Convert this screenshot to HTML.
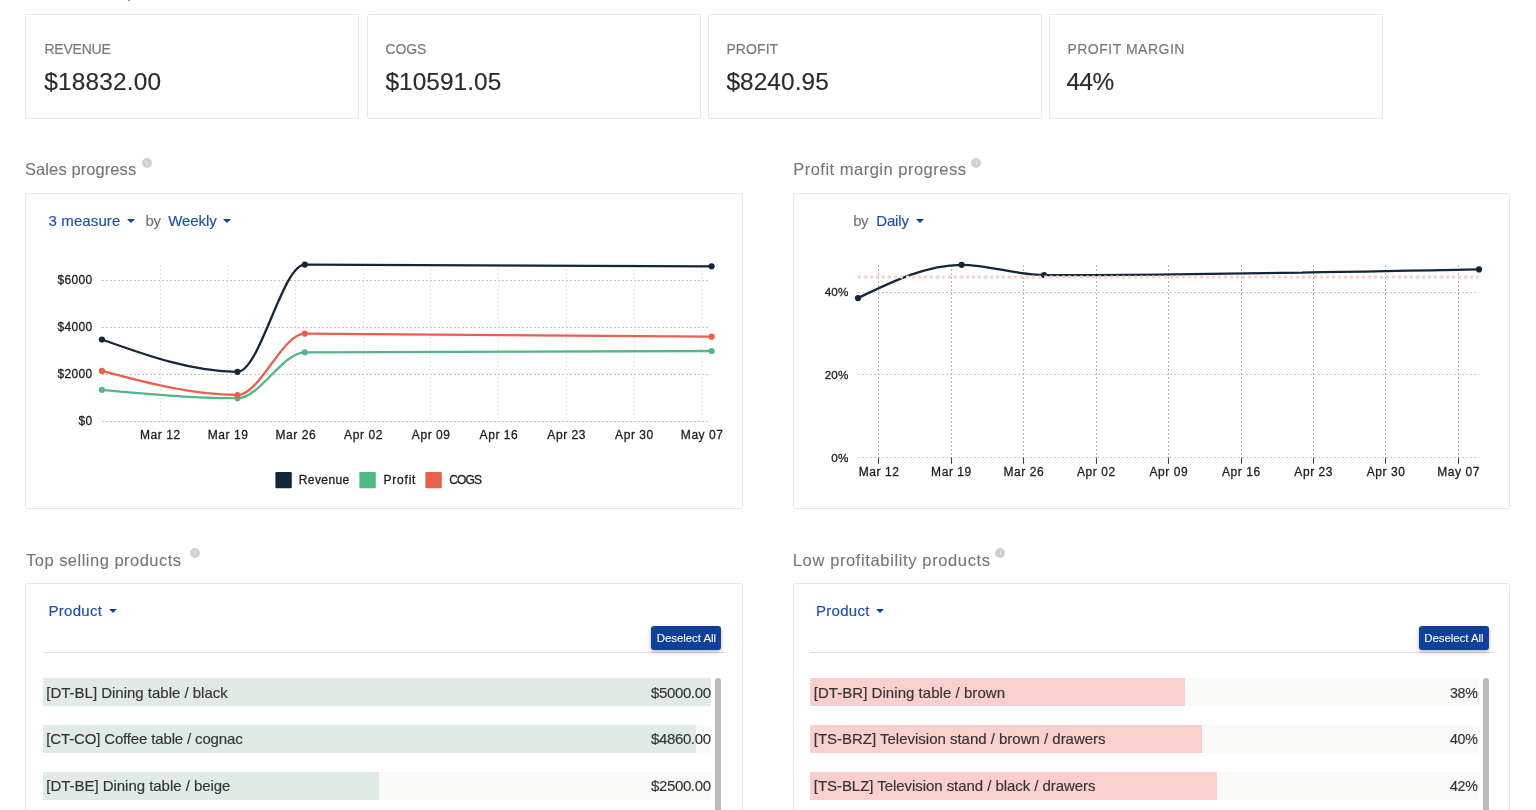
<!DOCTYPE html>
<html lang="en"><head><meta charset="utf-8"><title>Sales dashboard</title>
<style>
html,body{margin:0;padding:0;background:#fff}
body{width:1536px;height:810px;position:relative;overflow:hidden;font-family:'Liberation Sans',sans-serif;}
#app{position:absolute;left:0;top:0;width:1536px;height:810px;will-change:transform}
.t{position:absolute;white-space:pre;margin:0;padding:0;font-weight:400;-webkit-text-stroke:.16px}
ul{list-style:none;margin:0;padding:0}
button{border:0;padding:0;margin:0;font:inherit;cursor:pointer}
a{text-decoration:none}
.box{position:absolute;box-sizing:border-box;border:1px solid #e9e9e9;border-radius:2px;background:#fff}
.t.h{-webkit-text-stroke:.08px}
.abs{position:absolute}
.info{position:absolute;width:10px;height:10px;border-radius:50%;background:#cfd1d0;color:#ececec;font-size:7px;line-height:10.6px;text-align:center;font-weight:400}
.caret{position:absolute;width:0;height:0;border-left:4px solid transparent;border-right:4px solid transparent;border-top:4.6px solid #123f9c}
.btn{position:absolute;box-sizing:border-box;background:#10409a;border-radius:3px;box-shadow:0 2px 4px rgba(0,0,0,.28)}
.rule{position:absolute;height:1px;background:#dedede}
.row{position:absolute;height:28.2px;background:#fafaf8}
.fill{position:absolute;left:0;top:0;bottom:0}
.sb{position:absolute;width:5.8px;background:#bcbcbc;border-radius:3px 3px 0 0}
svg{position:absolute;overflow:visible}
svg text{font-family:'Liberation Sans',sans-serif;stroke:#1c1c1c;stroke-width:.28px}

</style></head><body><div id="app">
<div class="abs" style="left:128.4px;top:0;width:1.3px;height:1px;background:#8a8a8a"></div>
<section class="kpis">
<article class="box card" style="left:25px;top:14px;width:334px;height:105px">
  <h3 class="t" style="top:24.95px;font-size:14px;line-height:18px;color:#76787a;letter-spacing:-0.215px;left:18.40px;">REVENUE</h3>
  <p class="t" style="top:50.85px;font-size:24.4px;line-height:32px;color:#2a2b30;letter-spacing:0.213px;left:18.20px;">$18832.00</p>
</article>
<article class="box card" style="left:367px;top:14px;width:334px;height:105px">
  <h3 class="t" style="top:24.95px;font-size:14px;line-height:18px;color:#76787a;letter-spacing:-0.078px;left:17.40px;">COGS</h3>
  <p class="t" style="top:50.85px;font-size:24.4px;line-height:32px;color:#2a2b30;letter-spacing:0.063px;left:17.40px;">$10591.05</p>
</article>
<article class="box card" style="left:708px;top:14px;width:334px;height:105px">
  <h3 class="t" style="top:24.95px;font-size:14px;line-height:18px;color:#76787a;letter-spacing:0.091px;left:17.40px;">PROFIT</h3>
  <p class="t" style="top:50.85px;font-size:24.4px;line-height:32px;color:#2a2b30;letter-spacing:0.095px;left:17.40px;">$8240.95</p>
</article>
<article class="box card" style="left:1049px;top:14px;width:334px;height:105px">
  <h3 class="t" style="top:24.95px;font-size:14px;line-height:18px;color:#76787a;letter-spacing:0.503px;left:17.40px;">PROFIT MARGIN</h3>
  <p class="t" style="top:50.85px;font-size:24.4px;line-height:32px;color:#2a2b30;letter-spacing:-0.614px;left:16.60px;">44%</p>
</article>
</section>
<section class="panel sales-progress">
<h2 class="t h" style="top:159.38px;font-size:16.5px;line-height:21px;color:#737577;letter-spacing:0.088px;left:25.00px;">Sales progress</h2>
<span class="info" style="left:141.9px;top:157.5px">i</span>
<div class="box" style="left:25px;top:193px;width:718px;height:316px"></div>
<nav>
<a class="t" style="top:211.00px;font-size:15px;line-height:20px;color:#1f4fa6;letter-spacing:0.103px;left:48.60px;">3 measure</a>
<span class="caret" style="left:127.3px;top:218.8px"></span>
<span class="t" style="top:211.00px;font-size:15px;line-height:20px;color:#737577;letter-spacing:-0.544px;left:145.60px;">by</span>
<a class="t" style="top:211.00px;font-size:15px;line-height:20px;color:#1f4fa6;letter-spacing:-0.101px;left:168.30px;">Weekly</a>
<span class="caret" style="left:223.2px;top:218.8px"></span>
</nav>
<svg style="left:25px;top:193px" width="718" height="316" viewBox="25 193 718 316">
<g stroke="#e7e7e7" stroke-width="1" stroke-dasharray="2 2" fill="none">
<path d="M160.50 265V421.5"/>
<path d="M227.50 265V421.5"/>
<path d="M295.50 265V421.5"/>
<path d="M363.50 265V421.5"/>
<path d="M430.50 265V421.5"/>
<path d="M498.50 265V421.5"/>
<path d="M566.50 265V421.5"/>
<path d="M634.50 265V421.5"/>
<path d="M701.50 265V421.5"/>
</g>
<g stroke="#c2c2c2" stroke-width="1" stroke-dasharray="2 2" fill="none">
<path d="M102 280.50H710"/>
<path d="M102 327.50H710"/>
<path d="M102 374.50H710"/>
<path d="M102 421.50H710"/>
</g>
<g>
<text x="92.56" y="284.20" font-size="12" fill="#1c1c1c" text-anchor="end" letter-spacing="0.356">$6000</text>
<text x="92.56" y="331.20" font-size="12" fill="#1c1c1c" text-anchor="end" letter-spacing="0.356">$4000</text>
<text x="92.56" y="378.20" font-size="12" fill="#1c1c1c" text-anchor="end" letter-spacing="0.356">$2000</text>
<text x="92.56" y="425.20" font-size="12" fill="#1c1c1c" text-anchor="end" letter-spacing="0.356">$0</text>
<text x="160.28" y="439.10" font-size="12" fill="#1c1c1c" text-anchor="middle" letter-spacing="0.568">Mar 12</text>
<text x="228.02" y="439.10" font-size="12" fill="#1c1c1c" text-anchor="middle" letter-spacing="0.568">Mar 19</text>
<text x="295.76" y="439.10" font-size="12" fill="#1c1c1c" text-anchor="middle" letter-spacing="0.568">Mar 26</text>
<text x="363.50" y="439.10" font-size="12" fill="#1c1c1c" text-anchor="middle" letter-spacing="0.568">Apr 02</text>
<text x="431.24" y="439.10" font-size="12" fill="#1c1c1c" text-anchor="middle" letter-spacing="0.568">Apr 09</text>
<text x="498.98" y="439.10" font-size="12" fill="#1c1c1c" text-anchor="middle" letter-spacing="0.568">Apr 16</text>
<text x="566.72" y="439.10" font-size="12" fill="#1c1c1c" text-anchor="middle" letter-spacing="0.568">Apr 23</text>
<text x="634.46" y="439.10" font-size="12" fill="#1c1c1c" text-anchor="middle" letter-spacing="0.568">Apr 30</text>
<text x="702.20" y="439.10" font-size="12" fill="#1c1c1c" text-anchor="middle" letter-spacing="0.568">May 07</text>
</g>
<g><path d="M101.90 389.80 C147.10 394.00 192.30 398.20 237.50 398.20 C259.93 398.20 282.37 352.44 304.80 352.30 C440.40 351.43 576.00 351.22 711.60 351.00" fill="none" stroke="#52b688" stroke-width="2.3" stroke-linecap="round"/>
<circle cx="101.9" cy="389.8" r="3.1" fill="#52b688"/>
<circle cx="237.5" cy="398.2" r="3.1" fill="#52b688"/>
<circle cx="304.8" cy="352.3" r="3.1" fill="#52b688"/>
<circle cx="711.6" cy="351.0" r="3.1" fill="#52b688"/>
</g>
<g><path d="M101.90 370.90 C147.10 382.95 192.30 395.00 237.50 395.00 C259.93 395.00 282.37 333.60 304.80 333.60 C440.40 333.60 576.00 335.15 711.60 336.70" fill="none" stroke="#e9604b" stroke-width="2.3" stroke-linecap="round"/>
<circle cx="101.9" cy="370.9" r="3.1" fill="#e9604b"/>
<circle cx="237.5" cy="395.0" r="3.1" fill="#e9604b"/>
<circle cx="304.8" cy="333.6" r="3.1" fill="#e9604b"/>
<circle cx="711.6" cy="336.7" r="3.1" fill="#e9604b"/>
</g>
<g><path d="M101.90 339.50 C147.10 355.65 192.30 371.80 237.50 371.80 C259.93 371.80 282.37 264.60 304.80 264.60 C440.40 264.60 576.00 265.45 711.60 266.30" fill="none" stroke="#14273a" stroke-width="2.3" stroke-linecap="round"/>
<circle cx="101.9" cy="339.5" r="3.1" fill="#14273a"/>
<circle cx="237.5" cy="371.8" r="3.1" fill="#14273a"/>
<circle cx="304.8" cy="264.6" r="3.1" fill="#14273a"/>
<circle cx="711.6" cy="266.3" r="3.1" fill="#14273a"/>
</g>
<g>
<rect x="275.4" y="472" width="16.4" height="16.3" rx="1.2" fill="#14273a"/>
<text x="298.70" y="484.00" font-size="12" fill="#1c1c1c" letter-spacing="0.426">Revenue</text>
<rect x="359.4" y="472" width="16.4" height="16.3" rx="1.2" fill="#52b688"/>
<text x="383.60" y="484.00" font-size="12" fill="#1c1c1c" letter-spacing="0.757">Profit</text>
<rect x="425.4" y="472" width="16.4" height="16.3" rx="1.2" fill="#e9604b"/>
<text x="449.20" y="484.00" font-size="12" fill="#1c1c1c" letter-spacing="-0.815">COGS</text>
</g>
</svg>
</section>
<section class="panel margin-progress">
<h2 class="t h" style="top:159.38px;font-size:16.5px;line-height:21px;color:#737577;letter-spacing:0.495px;left:793.20px;">Profit margin progress</h2>
<span class="info" style="left:971.4px;top:157.5px">i</span>
<div class="box" style="left:793px;top:193px;width:717px;height:316px"></div>
<nav>
<span class="t" style="top:211.00px;font-size:15px;line-height:20px;color:#737577;letter-spacing:-0.544px;left:853.20px;">by</span>
<a class="t" style="top:211.00px;font-size:15px;line-height:20px;color:#1f4fa6;letter-spacing:-0.136px;left:876.20px;">Daily</a>
<span class="caret" style="left:916.2px;top:218.8px"></span>
</nav>
<svg style="left:793px;top:193px" width="717" height="316" viewBox="793 193 717 316">
<g stroke="#b4b4b4" stroke-width="1" stroke-dasharray="2 2" fill="none">
<path d="M878.50 265V457.5"/>
<path d="M951.50 265V457.5"/>
<path d="M1023.50 265V457.5"/>
<path d="M1096.50 265V457.5"/>
<path d="M1168.50 265V457.5"/>
<path d="M1241.50 265V457.5"/>
<path d="M1313.50 265V457.5"/>
<path d="M1385.50 265V457.5"/>
<path d="M1458.50 265V457.5"/>
</g>
<g stroke="#c6c6c6" stroke-width="1" stroke-dasharray="2 2" fill="none">
<path d="M858 292.5H1478.6"/>
<path d="M858 374.5H1478.6"/>
<path d="M858 457.5H1478.6"/>
</g>
<g stroke="#3a3a3a" stroke-width="1" fill="none">
<path d="M878.50 457.5V463.8"/>
<path d="M951.50 457.5V463.8"/>
<path d="M1023.50 457.5V463.8"/>
<path d="M1096.50 457.5V463.8"/>
<path d="M1168.50 457.5V463.8"/>
<path d="M1241.50 457.5V463.8"/>
<path d="M1313.50 457.5V463.8"/>
<path d="M1385.50 457.5V463.8"/>
<path d="M1458.50 457.5V463.8"/>
</g>
<g>
<text x="848.35" y="295.80" font-size="11.7" fill="#1c1c1c" text-anchor="end" letter-spacing="0.047">40%</text>
<text x="848.35" y="378.60" font-size="11.7" fill="#1c1c1c" text-anchor="end" letter-spacing="0.047">20%</text>
<text x="848.35" y="461.60" font-size="11.7" fill="#1c1c1c" text-anchor="end" letter-spacing="0.047">0%</text>
<text x="879.03" y="475.70" font-size="12" fill="#1c1c1c" text-anchor="middle" letter-spacing="0.568">Mar 12</text>
<text x="951.48" y="475.70" font-size="12" fill="#1c1c1c" text-anchor="middle" letter-spacing="0.568">Mar 19</text>
<text x="1023.93" y="475.70" font-size="12" fill="#1c1c1c" text-anchor="middle" letter-spacing="0.568">Mar 26</text>
<text x="1096.38" y="475.70" font-size="12" fill="#1c1c1c" text-anchor="middle" letter-spacing="0.568">Apr 02</text>
<text x="1168.83" y="475.70" font-size="12" fill="#1c1c1c" text-anchor="middle" letter-spacing="0.568">Apr 09</text>
<text x="1241.28" y="475.70" font-size="12" fill="#1c1c1c" text-anchor="middle" letter-spacing="0.568">Apr 16</text>
<text x="1313.73" y="475.70" font-size="12" fill="#1c1c1c" text-anchor="middle" letter-spacing="0.568">Apr 23</text>
<text x="1386.18" y="475.70" font-size="12" fill="#1c1c1c" text-anchor="middle" letter-spacing="0.568">Apr 30</text>
<text x="1458.63" y="475.70" font-size="12" fill="#1c1c1c" text-anchor="middle" letter-spacing="0.568">May 07</text>
</g>
<g><path d="M858.00 298.10 C892.53 281.45 927.07 264.80 961.60 264.80 C989.10 264.80 1016.60 275.10 1044.10 275.10 C1189.07 275.10 1334.03 272.25 1479.00 269.40" fill="none" stroke="#14273a" stroke-width="2.3" stroke-linecap="round"/>
<circle cx="858.0" cy="298.1" r="3.1" fill="#14273a"/>
<circle cx="961.6" cy="264.8" r="3.1" fill="#14273a"/>
<circle cx="1044.1" cy="275.1" r="3.1" fill="#14273a"/>
<circle cx="1479.0" cy="269.4" r="3.1" fill="#14273a"/>
</g>
<path d="M858 276.9H1478.6" stroke="#f9d0ce" stroke-width="3" stroke-dasharray="3 3" fill="none"/>
</svg>
</section>
<section class="panel top-selling">
<h2 class="t h" style="top:549.98px;font-size:16.5px;line-height:21px;color:#737577;letter-spacing:0.487px;left:26.00px;">Top selling products</h2>
<span class="info" style="left:190.2px;top:547.8px">i</span>
<div class="box" style="left:25px;top:583px;width:718px;height:260px"></div>
<nav>
<a class="t" style="top:601.20px;font-size:15px;line-height:20px;color:#1f4fa6;letter-spacing:0.299px;left:48.40px;">Product</a>
<span class="caret" style="left:108.7px;top:608.6px"></span>
</nav>
<div class="rule" style="left:42.6px;top:652px;width:683px"></div>
<button class="btn" style="left:651.1px;top:626.3px;width:70.2px;height:23.5px"><span class="t h" style="top:5.12px;font-size:11.5px;line-height:15px;color:#ffffff;letter-spacing:-0.063px;left:5.60px;">Deselect All</span></button>
<ul>
<li class="row" style="left:42.6px;top:678.0px;width:668.8px"><div class="fill" style="width:668.8px;background:#e1ebe5"></div>
  <span class="t" style="top:4.80px;font-size:15px;line-height:20px;color:#343434;letter-spacing:-0.010px;left:3.70px;">[DT-BL] Dining table / black</span>
  <span class="t" style="top:4.80px;font-size:15px;line-height:20px;color:#343434;letter-spacing:-0.368px;left:608.40px;">$5000.00</span>
</li>
<li class="row" style="left:42.6px;top:724.7px;width:668.8px"><div class="fill" style="width:653.4px;background:#e1ebe5"></div>
  <span class="t" style="top:4.80px;font-size:15px;line-height:20px;color:#343434;letter-spacing:-0.152px;left:3.70px;">[CT-CO] Coffee table / cognac</span>
  <span class="t" style="top:4.80px;font-size:15px;line-height:20px;color:#343434;letter-spacing:-0.368px;left:608.40px;">$4860.00</span>
</li>
<li class="row" style="left:42.6px;top:771.5px;width:668.8px"><div class="fill" style="width:336.5px;background:#e1ebe5"></div>
  <span class="t" style="top:4.80px;font-size:15px;line-height:20px;color:#343434;letter-spacing:-0.034px;left:3.70px;">[DT-BE] Dining table / beige</span>
  <span class="t" style="top:4.80px;font-size:15px;line-height:20px;color:#343434;letter-spacing:-0.368px;left:608.40px;">$2500.00</span>
</li>
</ul>
<div class="sb" style="left:715.3px;top:677.8px;height:140px"></div>
</section>
<section class="panel low-profit">
<h2 class="t h" style="top:549.98px;font-size:16.5px;line-height:21px;color:#737577;letter-spacing:0.624px;left:792.80px;">Low profitability products</h2>
<span class="info" style="left:995.4px;top:547.8px">i</span>
<div class="box" style="left:793px;top:583px;width:717px;height:260px"></div>
<nav>
<a class="t" style="top:601.20px;font-size:15px;line-height:20px;color:#1f4fa6;letter-spacing:0.299px;left:815.90px;">Product</a>
<span class="caret" style="left:876.2px;top:608.6px"></span>
</nav>
<div class="rule" style="left:810.1px;top:652px;width:683px"></div>
<button class="btn" style="left:1418.6px;top:626.3px;width:70.2px;height:23.5px"><span class="t h" style="top:5.12px;font-size:11.5px;line-height:15px;color:#ffffff;letter-spacing:-0.063px;left:5.60px;">Deselect All</span></button>
<ul>
<li class="row" style="left:810.1px;top:678.0px;width:668.8px"><div class="fill" style="width:375.1px;background:#f9d0ce"></div>
  <span class="t" style="top:4.80px;font-size:15px;line-height:20px;color:#343434;letter-spacing:0.042px;left:3.70px;">[DT-BR] Dining table / brown</span>
  <span class="t" style="top:5.63px;font-size:14.2px;line-height:18px;color:#343434;letter-spacing:-0.253px;left:639.90px;">38%</span>
</li>
<li class="row" style="left:810.1px;top:724.7px;width:668.8px"><div class="fill" style="width:392.1px;background:#f9d0ce"></div>
  <span class="t" style="top:4.80px;font-size:15px;line-height:20px;color:#343434;letter-spacing:-0.013px;left:3.70px;">[TS-BRZ] Television stand / brown / drawers</span>
  <span class="t" style="top:5.63px;font-size:14.2px;line-height:18px;color:#343434;letter-spacing:-0.253px;left:639.90px;">40%</span>
</li>
<li class="row" style="left:810.1px;top:771.5px;width:668.8px"><div class="fill" style="width:407.3px;background:#f9d0ce"></div>
  <span class="t" style="top:4.80px;font-size:15px;line-height:20px;color:#343434;letter-spacing:-0.053px;left:3.70px;">[TS-BLZ] Television stand / black / drawers</span>
  <span class="t" style="top:5.63px;font-size:14.2px;line-height:18px;color:#343434;letter-spacing:-0.253px;left:639.90px;">42%</span>
</li>
</ul>
<div class="sb" style="left:1482.8px;top:677.8px;height:140px"></div>
</section>
</div></body></html>
